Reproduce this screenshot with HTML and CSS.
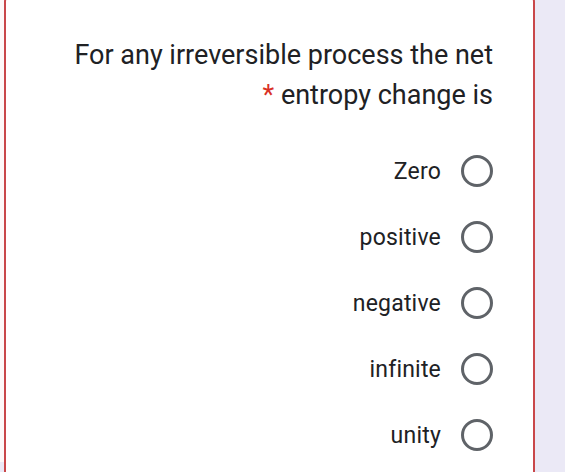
FILE: index.html
```html
<!DOCTYPE html>
<html lang="en">
<head>
<meta charset="utf-8">
<link rel="stylesheet" href="styles.css">
</head>
<body>
<div class="page">
  <div class="card">
    <div class="question">
      <div class="q-line">For any irreversible process the net</div>
      <div class="q-line"><span class="req">*</span> entropy change is</div>
    </div>
    <div class="options">
      <label class="option"><span class="label">Zero</span><span class="radio"></span></label>
      <label class="option"><span class="label">positive</span><span class="radio"></span></label>
      <label class="option"><span class="label">negative</span><span class="radio"></span></label>
      <label class="option"><span class="label">infinite</span><span class="radio"></span></label>
      <label class="option"><span class="label">unity</span><span class="radio"></span></label>
    </div>
  </div>
</div>
</body>
</html>
```

FILE: styles.css
```css
html, body {
  margin: 0;
  padding: 0;
  background: #ebe9f6;
  height: 100%;
  overflow: hidden;
}
.page {
  width: 565px;
  height: 472px;
  background: linear-gradient(to right, #fdf8f8 0, #fdf8f8 4px, transparent 4px);
}
.card {
  margin-left: 4px;
  margin-top: -10px;
  width: 527px;
  height: 500px;
  background: #ffffff;
  border: 2px solid #c9474a;
  border-radius: 12px;
  font-family: Roboto, "Noto Sans", sans-serif;
  color: #202124;
}
.question {
  padding: 43px 40px 0 0;
  text-align: right;
  font-size: 27px;
  line-height: 40px;
}
.req {
  color: #d93025;
}
.options {
  padding: 40px 40px 0 0;
  display: flex;
  flex-direction: column;
  align-items: flex-end;
  gap: 34px;
}
.option {
  display: flex;
  align-items: center;
  gap: 20px;
  height: 32px;
  font-size: 23px;
  letter-spacing: 0.2px;
}
.radio {
  width: 26px;
  height: 26px;
  border: 3px solid #5f6368;
  border-radius: 50%;
}
```
